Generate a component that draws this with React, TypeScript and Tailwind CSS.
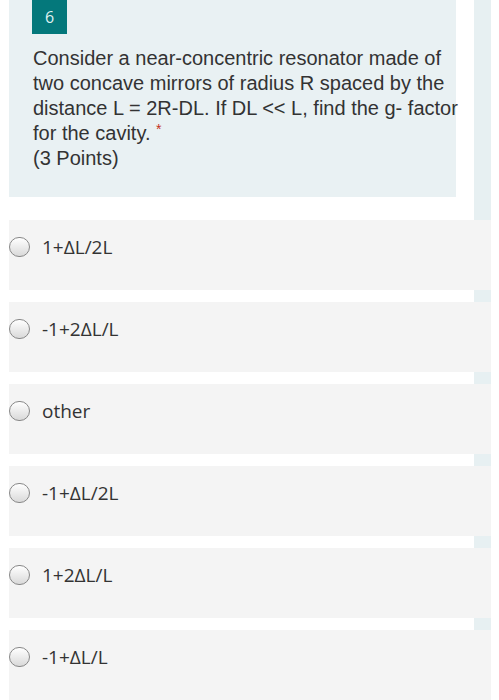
const OPTIONS = ['1+ΔL/2L', '-1+2ΔL/L', 'other', '-1+ΔL/2L', '1+2ΔL/L', '-1+ΔL/L'];

function Radio() {
  return (
    <span className="block h-[20px] w-[21px] shrink-0 rounded-full border border-[#888] bg-[linear-gradient(to_bottom,#ffffff,#d9d9d9)]" />
  );
}

function Option({ label }: { label: string }) {
  return (
    <div className="h-[70px] bg-[#f4f4f4] pt-[15px]">
      <div className="flex items-center gap-[12px]">
        <Radio />
        <span className="text-[19px] leading-[24px] text-[#333]" style={{ fontFamily: '"Open Sans", sans-serif' }}>
          {label}
        </span>
      </div>
    </div>
  );
}

export default function App() {
  return (
    <div className="h-[700px] w-[499px] overflow-hidden bg-white pl-[9px]">
      <div className="min-h-[700px] w-[482px] bg-[linear-gradient(to_right,transparent_465px,#e7f0f2_465px)]">
        <div className="h-[197px] w-[447px] bg-[#e9f1f3] pl-[23px]">
          <div
            className="flex h-[34px] w-[35px] items-center justify-center bg-[#04787b] text-[16px] text-[#dff1f1]"
            style={{ fontFamily: '"Open Sans", sans-serif' }}
          >
            6
          </div>
          <div
            className="mt-[12px] w-[432px] pl-[1px] text-[20px] leading-[25px] text-[#333]"
            style={{ fontFamily: '"Liberation Sans", Arial, sans-serif' }}
          >
            <p>
              Consider a near-concentric resonator made of two concave mirrors of radius R spaced by the distance L =
              2R-DL. If DL &lt;&lt; L, find the g-&nbsp;factor for the cavity.{' '}
              <span className="relative top-[-6px] text-[14px] leading-none text-[#c4321c]">*</span>
            </p>
            <p>(3 Points)</p>
          </div>
        </div>
        <div className="mt-[23px] flex flex-col gap-[12px]">
          {OPTIONS.map((o) => (
            <Option key={o} label={o} />
          ))}
        </div>
      </div>
    </div>
  );
}
